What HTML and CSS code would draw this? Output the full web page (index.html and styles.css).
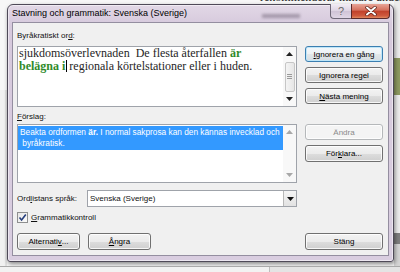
FILE: index.html
```html
<!DOCTYPE html>
<html lang="sv">
<head>
    <meta charset="UTF-8">
    <title>Stavning och grammatik</title>
    <link rel="stylesheet" href="styles.css">
</head>
<body>
    <div class="doc"><span>rekommenderar mindre undersökningar</span></div>
    <div class="window">
        <div class="titlebar">
            <span class="title">Stavning och grammatik: Svenska (Sverige)</span>
            <span class="glow"></span>
            <div class="caption">
                <span class="cap help">?</span>
                <span class="cap close">
                    <svg width="14" height="10" viewBox="0 0 14 10">
                        <path d="M3 1.5L11 8.5M11 1.5L3 8.5" stroke="#5a1e14" stroke-width="3.4" stroke-linecap="round"/>
                        <path d="M3 1.5L11 8.5M11 1.5L3 8.5" stroke="#fff" stroke-width="2" stroke-linecap="round"/>
                    </svg>
                </span>
            </div>
        </div>

        <div class="client">
            <div class="label">Byråkratiskt or<u>d</u>:</div>
            <div class="row">
                <div class="box textbox">
                    <div class="text">sjukdomsöverlevnaden&nbsp; De flesta återfallen <b class="hit">är</b><br><b class="hit">belägna i</b><i class="caret"></i>regionala körtelstationer eller i huden.</div>
                    <div class="vscroll">
                        <svg width="7" height="4" viewBox="0 0 7 4"><path d="M0 4L3.5 0L7 4z"/></svg>
                        <span class="thumb"><i></i><i></i><i></i></span>
                        <svg width="7" height="4" viewBox="0 0 7 4"><path d="M0 0L3.5 4L7 0z"/></svg>
                    </div>
                </div>
                <div class="side">
                    <span class="btn focus"><u>I</u>gnorera en gång</span>
                    <span class="btn">Ignorera re<u>g</u>el</span>
                    <span class="btn"><u>N</u>ästa mening</span>
                </div>
            </div>

            <div class="label second"><u>F</u>örslag:</div>
            <div class="row">
                <div class="box suggest">
                    <div class="list">
                        <div class="item">Beakta ordformen <b>är.</b> I normal sakprosa kan den kännas invecklad och<br>&nbsp;byråkratisk.</div>
                    </div>
                    <div class="vscroll off">
                        <svg width="7" height="4" viewBox="0 0 7 4"><path d="M0 4L3.5 0L7 4z"/></svg>
                        <svg width="7" height="4" viewBox="0 0 7 4"><path d="M0 0L3.5 4L7 0z"/></svg>
                    </div>
                </div>
                <div class="side">
                    <span class="btn disabled">Ändra</span>
                    <span class="btn tall">För<u>k</u>lara...</span>
                </div>
            </div>

            <div class="lang">
                <span class="lang-label">Ord<u>l</u>istans språk:</span>
                <div class="select">
                    <span class="value">Svenska (Sverige)</span>
                    <span class="drop">
                        <svg width="7" height="4" viewBox="0 0 7 4"><path d="M0 0L3.5 4L7 0z"/></svg>
                    </span>
                </div>
            </div>

            <div class="check">
                <span class="checkbox">
                    <svg width="9" height="9" viewBox="0 0 9 9"><path d="M1.5 4.5L3.6 7L7.8 1.4" fill="none" stroke="#253e7c" stroke-width="1.6"/></svg>
                </span>
                <span><u>G</u>rammatikkontroll</span>
            </div>

            <div class="footer">
                <div class="footer-left">
                    <span class="btn wide">Alternati<u>v</u>...</span>
                    <span class="btn wide"><u>Å</u>ngra</span>
                </div>
                <span class="btn close-btn">Stäng</span>
            </div>
        </div>
    </div>
    <div class="taskbar"></div>
</body>
</html>
```

FILE: styles.css
```css
body {
    margin: 0;
    width: 400px;
    height: 272px;
    overflow: hidden;
    font-family: "Liberation Sans", Arial, sans-serif;
    font-size: 8px;
    color: #111;
    background:
        linear-gradient(#ececec 58px, #8d9960 58px, #8d9960 95px, #ececec 95px, #ececec 233px, #7e7e7e 233px, #7e7e7e 244px, #d4d4d4 244px) right top / 6px 100% no-repeat,
        linear-gradient(to right, #f1f1f1 5px, #e2e2e2 5px, #e2e2e2 7px, transparent 7px) left 90px / 7px 100% no-repeat,
        #f7f7f7;
}
.doc {
    height: 4px;
    overflow: hidden;
}
.doc span {
    display: block;
    margin-top: -9px;
    padding-left: 260px;
    font: 12px/12px "Liberation Serif", serif;
    white-space: nowrap;
    color: #222;
}

/* window frame */
.window {
    box-sizing: border-box;
    width: 387px;
    height: 258px;
    margin-left: 7px;
    border: 1px solid #4f4a58;
    border-radius: 6px 6px 3px 3px;
    background: linear-gradient(#e2d8e6, #d6c9dc 20px, #d9cde0);
    box-shadow: 1px 2px 4px rgba(0, 0, 0, 0.45), inset 0 0 0 1px rgba(255, 255, 255, 0.5);
}
.titlebar {
    display: flex;
    align-items: flex-start;
    height: 17px;
    padding-left: 4px;
}
.title {
    font-size: 9px;
    line-height: 17px;
    color: #000;
    white-space: nowrap;
}
.glow {
    width: 38px;
    height: 4px;
    margin: 9px 30px 0 auto;
    background: rgba(60, 50, 70, 0.35);
    filter: blur(1.5px);
}
.caption {
    display: flex;
    margin-right: 3px;
    margin-top: -1px;
}
.cap {
    box-sizing: border-box;
    height: 15px;
    display: flex;
    align-items: center;
    justify-content: center;
    border: 1px solid #6f6878;
    border-top: none;
}
.help {
    width: 21px;
    border-radius: 0 0 0 4px;
    border-right: none;
    background: linear-gradient(#f2ecf4, #ddd3e2 50%, #cfc3d6 51%, #e0d6e6);
    font-size: 11px;
    color: #6a6a6a;
}
.close {
    width: 39px;
    border-radius: 0 0 4px 0;
    border-color: #5a2a2a;
    background: linear-gradient(#e8a597, #d46f5c 45%, #c0402a 50%, #cf5a3e 85%, #e08a60);
}

/* client area */
.client {
    box-sizing: border-box;
    height: 234px;
    margin: 0 4px;
    padding: 8px 5px 0 4px;
    border: 1px solid #948ea0;
    background: #f0f0f0;
}
.label {
    height: 10px;
    line-height: 10px;
    margin-bottom: 5px;
}
.label.second {
    margin-top: 5px;
    margin-bottom: 2px;
}
.row {
    display: flex;
    gap: 8px;
}
.box {
    box-sizing: border-box;
    width: 280px;
    display: flex;
    border: 1px solid #9fa3aa;
    background: #fff;
}
.textbox {
    height: 61px;
}
.text {
    flex: 1;
    padding-left: 1px;
    font: 12px/12.5px "Liberation Serif", serif;
    color: #262626;
    white-space: nowrap;
}
.hit {
    color: #2f8a2a;
}
.caret {
    display: inline-block;
    width: 1px;
    height: 12px;
    margin: 0 2px 0 1px;
    vertical-align: -2px;
    background: #000;
}
.vscroll {
    width: 13px;
    display: flex;
    flex-direction: column;
    align-items: center;
    justify-content: space-between;
    padding: 5px 0;
    box-sizing: border-box;
    background: #f8f8f8;
}
.vscroll svg {
    fill: #222;
}
.vscroll.off svg {
    fill: #a8a8a8;
}
.thumb {
    box-sizing: border-box;
    width: 10px;
    height: 30px;
    display: flex;
    flex-direction: column;
    align-items: center;
    justify-content: center;
    gap: 1px;
    border: 1px solid #c6c6c6;
    border-radius: 2px;
    background: linear-gradient(to right, #f4f4f4, #e6e6e6);
}
.thumb i {
    width: 5px;
    height: 1px;
    background: #9a9a9a;
}
.side {
    width: 78px;
    display: flex;
    flex-direction: column;
    gap: 5px;
}
.btn {
    box-sizing: border-box;
    height: 16px;
    display: flex;
    align-items: center;
    justify-content: center;
    border: 1px solid #707070;
    border-radius: 3px;
    background: linear-gradient(#f3f3f3, #ebebeb 50%, #dddddd 51%, #cfcfcf);
    box-shadow: inset 0 0 0 1px rgba(255, 255, 255, 0.8);
    color: #000;
    white-space: nowrap;
}
.btn.focus {
    border-color: #3c7fb1;
    box-shadow: inset 0 0 0 1px #bfe6f8;
    background: linear-gradient(#f4f8fb, #edf1f4 50%, #e2e7ea 51%, #d6dde2);
}
.btn.disabled {
    border-color: #b5b8ba;
    background: #f4f4f4;
    color: #8a8a8a;
}
.btn.tall {
    height: 17px;
}
.suggest {
    height: 59px;
}
.list {
    flex: 1;
    padding-top: 1px;
}
.item {
    padding: 1px 2px;
    font-size: 8.3px;
    line-height: 11px;
    background: #3399ff;
    color: #fff;
    white-space: nowrap;
}

/* language and checkbox */
.lang {
    display: flex;
    align-items: center;
    margin-top: 7px;
    width: 280px;
}
.lang-label {
    width: 70px;
}
.select {
    box-sizing: border-box;
    flex: 1;
    height: 17px;
    display: flex;
    align-items: center;
    border: 1px solid #9fa3aa;
    background: #fff;
}
.value {
    flex: 1;
    padding-left: 2px;
}
.drop {
    box-sizing: border-box;
    width: 13px;
    height: 15px;
    display: flex;
    align-items: center;
    justify-content: center;
    border-left: 1px solid #b8b8b8;
    background: linear-gradient(#f4f4f4, #e2e2e2);
}
.drop svg {
    fill: #111;
}
.check {
    display: flex;
    align-items: center;
    gap: 3px;
    margin-top: 5px;
    height: 11px;
}
.checkbox {
    box-sizing: border-box;
    width: 11px;
    height: 11px;
    display: flex;
    align-items: center;
    justify-content: center;
    border: 1px solid #8e8f8f;
    background: linear-gradient(135deg, #e6e6e6, #fbfbfb);
}
.footer {
    display: flex;
    justify-content: space-between;
    margin-top: 10px;
}
.footer-left {
    display: flex;
    gap: 8px;
}
.btn.wide {
    width: 63px;
    height: 17px;
}
.btn.close-btn {
    width: 78px;
    height: 17px;
}
.taskbar {
    margin-top: 4px;
    height: 8px;
    border-top: 1px solid #a9a9a9;
    background: linear-gradient(to right, #f2f2f2 269px, #bdbdbd 269px, #bdbdbd 270px, #e4e4e4 270px);
}
```
